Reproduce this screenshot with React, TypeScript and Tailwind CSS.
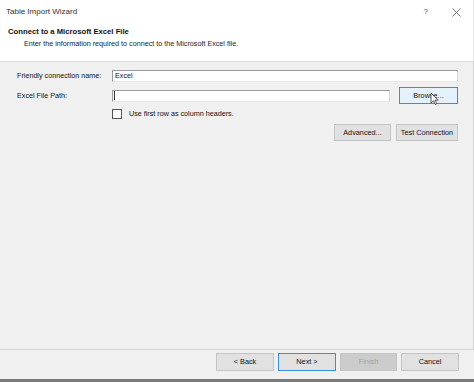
import React from 'react';

const font = { fontFamily: '"Liberation Sans", Arial, sans-serif' };

function WinButton({
  children,
  className = '',
}: {
  children: React.ReactNode;
  className?: string;
}) {
  return (
    <div
      className={`flex items-center justify-center border text-[7.3px] leading-none ${className}`}
    >
      {children}
    </div>
  );
}

export default function App() {
  return (
    <div className="w-[474px] h-[382px] flex flex-col bg-white text-[#111] overflow-hidden" style={font}>
      {/* Header */}
      <div className="h-[61px] flex flex-col bg-white border-r border-[#e6e6e6]">
        <div className="h-[24px] flex items-center pl-[6px] pr-[12px]">
          <span className="text-[8px] text-[#333]">Table Import Wizard</span>
          <span className="ml-auto text-[8px] text-[#555] mr-[24px]">?</span>
          <svg width="9" height="9" viewBox="0 0 9 9">
            <path d="M0.5 0.5 L8.5 8.5 M8.5 0.5 L0.5 8.5" stroke="#555" strokeWidth="0.8" />
          </svg>
        </div>
        <div className="pl-[8px] pt-[4px] text-[7.7px] font-bold leading-none">Connect to a Microsoft Excel File</div>
        <div className="pl-[24px] pt-[4px] text-[7.2px] leading-none text-[#222]">
          Enter the information required to connect to the Microsoft Excel file.
        </div>
      </div>

      {/* Body */}
      <div className="flex-1 flex flex-col bg-[#f0f0f0] border-t border-[#dadada] border-r border-r-[#d4d4d4]">
        <div className="flex items-center mt-[8px] h-[12px]">
          <span className="w-[112px] pl-[17px] text-[7.2px] leading-none">Friendly connection name:</span>
          <div className="w-[346px] h-[12px] bg-white border border-[#9a9a9a] border-b-[#e8e8e8] border-r-[#d8d8d8] flex items-center pl-[2px] text-[7.2px] leading-none">
            Excel
          </div>
        </div>
        <div className="flex items-center mt-[5px] h-[17px]">
          <span className="w-[112px] pl-[17px] text-[7.2px] leading-none">Excel File Path:</span>
          <div className="w-[278px] h-[12px] bg-white border border-[#9a9a9a] border-b-[#e8e8e8] border-r-[#d8d8d8] flex items-center pl-[1px]">
            <div className="w-[1px] h-[9px] bg-[#333]" />
          </div>
          <div className="relative ml-[9px]">
            <WinButton className="w-[59px] h-[17px] bg-[#e5f1fb] border-[#3c8fd6]">Browse...</WinButton>
            <svg width="10" height="14" viewBox="0 0 10 14" className="absolute left-[31px] top-[5px]">
              <path d="M1 1 L1 11 L3.5 8.7 L5.3 12.6 L6.8 11.9 L5 8.1 L8.3 8.1 Z" fill="white" stroke="#333" strokeWidth="0.8" strokeLinejoin="round" />
            </svg>
          </div>
        </div>
        <div className="flex items-center mt-[4px] h-[11px] pl-[112px]">
          <div className="w-[10px] h-[10px] bg-white border border-[#555]" />
          <span className="ml-[7px] text-[7.2px] leading-none">Use first row as column headers.</span>
        </div>
        <div className="flex justify-end gap-[5px] mt-[5px] pr-[15px]">
          <WinButton className="w-[57px] h-[17px] bg-[#e1e1e1] border-[#c4c4c4]">Advanced...</WinButton>
          <WinButton className="w-[62px] h-[17px] bg-[#e1e1e1] border-[#c4c4c4]">Test Connection</WinButton>
        </div>
      </div>

      {/* Footer */}
      <div className="h-[30px] flex items-start justify-end gap-[4px] pr-[15px] pt-[3px] bg-[#f0f0f0] border-t border-[#d4d4d4]">
        <WinButton className="w-[58px] h-[18px] bg-[#e1e1e1] border-[#c4c4c4]">&lt; Back</WinButton>
        <WinButton className="w-[58px] h-[18px] bg-[#e1e1e1] border-[#3c8fd6]">Next &gt;</WinButton>
        <WinButton className="w-[57px] h-[18px] bg-[#cccccc] border-[#c4c4c4] text-[#a3a3a3]">Finish</WinButton>
        <WinButton className="w-[58px] h-[18px] bg-[#e1e1e1] border-[#c4c4c4]">Cancel</WinButton>
      </div>
      <div className="h-[3px] bg-[#7a7a7a]" />
    </div>
  );
}
